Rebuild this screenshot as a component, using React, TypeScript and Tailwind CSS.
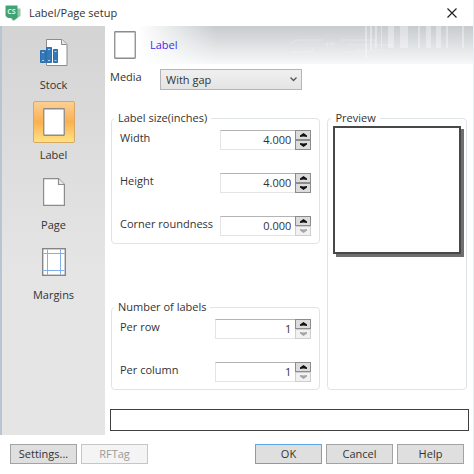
import React, { useState } from "react";

type Section = "Stock" | "Label" | "Page" | "Margins";

const StockIcon = () => (
  <svg width="30" height="30" viewBox="0 0 30 30" fill="none">
    <path d="M7.5 2.5H23l5 5V28.500H7.500Z" fill="#fff" stroke="#8c8c8c" />
    <path d="M22.500 2.500V7.500H27.500" fill="#e8e8e8" stroke="#8c8c8c" />
    <path d="M1.500 13.500h5v12h-5zM7.500 10.500h5v15h-5zM14.500 12.500h4v13h-4z" fill="#3479b8" stroke="#2e6fae" />
    <path d="M3 15.500h2M3 23.500h2M9 12.500h2M9 23.500h2M15.500 14.500h2M15.500 23.500h2" stroke="#b5d4ee" />
  </svg>
);

const LabelIcon = () => (
  <svg width="22" height="28" viewBox="0 0 22 28" fill="none">
    <rect x="0.75" y="0.75" width="20.500" height="26.500" rx="0.500" fill="#fff" stroke="#8c8c8c" strokeWidth="1.300" />
  </svg>
);

const PageIcon = () => (
  <svg width="22" height="28" viewBox="0 0 22 28" fill="none">
    <path d="M0.600 0.600H15.500L21.400 6.500V27.400H0.600Z" fill="#fff" stroke="#8c8c8c" strokeWidth="1.200" />
    <path d="M15.500 0.600V6.500H21.400" fill="#e8e8e8" stroke="#8c8c8c" strokeWidth="1.200" />
  </svg>
);

const MarginsIcon = () => (
  <svg width="24" height="28" viewBox="0 0 24 28" fill="none">
    <rect x="0.700" y="0.700" width="22.600" height="26.600" fill="#fff" stroke="#858585" strokeWidth="1.400" />
    <path d="M5.500 1.500V26.500M18.500 1.500V26.500M1.500 5.500H22.500M1.500 22.500H22.500" stroke="#7fb0ee" />
  </svg>
);

const sections: { name: Section; icon: React.ReactNode }[] = [
  { name: "Stock", icon: <StockIcon /> },
  { name: "Label", icon: <LabelIcon /> },
  { name: "Page", icon: <PageIcon /> },
  { name: "Margins", icon: <MarginsIcon /> },
];

const AppLogo = () => (
  <svg width="16" height="16" viewBox="0 0 16 16">
    <path d="M12 3.500h3.500V11L8 16 5 12.500Z" fill="#8fc9ab" />
    <path d="M1 0.500h11.500v10L10 13H3L0.500 11V1Z" fill="#43a274" />
    <path d="M7 13l2 2.500 3.500-3V10Z" fill="#43a274" />
    <text x="6.500" y="8.500" textAnchor="middle" fontSize="7" fontWeight="700" fill="#d9f3e5">
      CS
    </text>
  </svg>
);

const Banner = () => (
  <svg
    className="absolute right-0 top-0 h-full w-[190px]"
    viewBox="0 0 190 38"
    fill="none"
  >
    <path
      d="M82 0h2v32h-2zM87 0h2v24h-2zM92 0h2v22h-2zM98 0h1v22h-1zM105 0h6v22h-6zM117 0h8v22h-8zM135 0h2v22h-2zM143 0h5v22h-5zM153 0h5v22h-5zM163 0h2v22h-2zM179 0h2v22h-2z"
      fill="#fff"
      fillOpacity="0.350"
    />
    <path
      d="M8 18q2-4 8-4h24M8 26h18q4 0 4-4M42 18h10M44 16v6M49 16v6M58 14h34v12H62M64 19h46M72 24h30"
      stroke="#fff"
      strokeOpacity="0.220"
    />
  </svg>
);

const GroupBox = ({
  title,
  children,
}: {
  title: string;
  children: React.ReactNode;
}) => (
  <fieldset className="min-w-0 rounded-sm border border-[#dfe4e6] px-2 pb-[7px]">
    <legend className="-ml-1.5 px-1 leading-4">{title}</legend>
    {children}
  </fieldset>
);

const Arrow = ({ down = false }: { down?: boolean }) => (
  <svg width="7" height="4" viewBox="0 0 7 4" fill="currentColor">
    <path d={down ? "M0 0L3.500 0.600L7 0V1.500L3.500 4L0 1.500Z" : "M0 4L3.500 3.400L7 4V2.500L3.500 0L0 2.500Z"} />
  </svg>
);

const SpinField = ({
  label,
  id,
  initial,
  step,
  digits,
  min,
  wide = false,
}: {
  label: string;
  id: string;
  initial: number;
  step: number;
  digits: number;
  min: number;
  wide?: boolean;
}) => {
  const [value, setValue] = useState(initial);
  const stepButton =
    "flex min-h-0 flex-1 items-center justify-center border border-[#8c8c8c] bg-[#dcdcdc] text-[#111] disabled:border-[#cfcfcf] disabled:bg-[#f1f1f1] disabled:text-[#a5a5a5]";

  return (
    <div className="flex items-start justify-between">
      <label htmlFor={id} className="whitespace-nowrap leading-4">
        {label}
      </label>
      <div className={wide ? "flex h-5 w-24" : "flex h-5 w-[91px]"}>
        <input
          id={id}
          type="text"
          className="min-w-0 flex-1 border border-r-0 border-[#e2e5e7] border-t-[#b4b4b4] bg-white pr-1 text-right"
          value={value.toFixed(digits)}
          onChange={(e) => setValue(Number(e.target.value) || min)}
        />
        <div className="flex w-4 flex-col">
          <button
            type="button"
            aria-label={`Increase ${label}`}
            className={stepButton}
            onClick={() => setValue((v) => v + step)}
          >
            <Arrow />
          </button>
          <button
            type="button"
            aria-label={`Decrease ${label}`}
            className={stepButton}
            disabled={value <= min}
            onClick={() => setValue((v) => Math.max(min, v - step))}
          >
            <Arrow down />
          </button>
        </div>
      </div>
    </div>
  );
};

const DialogButton = ({
  children,
  disabled,
  primary,
}: {
  children: React.ReactNode;
  disabled?: boolean;
  primary?: boolean;
}) => (
  <button
    type="button"
    disabled={disabled}
    className={`h-5 w-[67px] border leading-4 disabled:border-[#c6c6c6] disabled:bg-[#f4f4f4] disabled:text-[#9a9a9a] ${
      primary ? "border-[#5fa6e6] bg-[#dfdfdf]" : "border-[#a3a3a3] bg-[#dfdfdf]"
    }`}
  >
    {children}
  </button>
);

export default function App() {
  const [section, setSection] = useState<Section>("Label");

  return (
    <div className="flex min-h-screen flex-col border-r border-[#e6f3f4] bg-white font-['Open_Sans','Noto_Sans',sans-serif] text-[11px] text-[#333]">
      <header className="flex h-[26px] items-center pl-[5px] pr-4">
        <AppLogo />
        <h1 className="ml-2 flex-1">Label/Page setup</h1>
        <button type="button" aria-label="Close">
          <svg width="10" height="10" viewBox="0 0 10 10" stroke="#222" strokeWidth="1.200">
            <path d="M0.500 0.500L9.500 9.500M9.500 0.500L0.500 9.500" />
          </svg>
        </button>
      </header>

      <div className="flex flex-1">
        <nav className="flex w-[105px] shrink-0 flex-col items-center gap-2 border-l-2 border-[#b7c5d3] bg-linear-to-b from-[#d4d4d4] to-[#e5e5e5] to-60% pt-[5px]">
          {sections.map(({ name, icon }) => (
            <button
              key={name}
              type="button"
              className="flex flex-col items-center gap-1"
              onClick={() => setSection(name)}
            >
              <span
                className={
                  section === name
                    ? "flex h-[42px] w-[42px] items-center justify-center rounded-xs border border-[#d9a860] bg-linear-to-b from-[#fbcf94] via-[#fbb04e] to-[#fde384]"
                    : "flex h-[42px] w-[42px] items-center justify-center"
                }
              >
                {icon}
              </span>
              <span className="leading-4">{name}</span>
            </button>
          ))}
        </nav>

        <main className="min-w-0 flex-1">
          <div className="relative flex h-[38px] items-center gap-3.5 bg-linear-to-b from-[#c7cbce] to-[#f7f8f8] pl-[9px]">
            <div className="absolute inset-y-0 left-0 w-28 bg-linear-to-r from-white from-30% to-transparent" />
            <Banner />
            <span className="relative">
              <LabelIcon />
            </span>
            <h2 className="relative leading-4 text-[#3a2fee]">Label</h2>
          </div>

          <div className="flex items-start pl-[5px] pt-[5px]">
            <label htmlFor="media" className="w-[50px] leading-4">
              Media
            </label>
            <div className="relative w-[142px]">
              <select
                id="media"
                className="h-[21px] w-full appearance-none border border-[#b5b5b5] bg-linear-to-b from-[#f0f0f0] to-[#e4e4e4] pl-[5px] leading-4"
              >
                <option>With gap</option>
                <option>Continuous</option>
              </select>
              <svg
                className="pointer-events-none absolute right-[5px] top-2"
                width="7"
                height="5"
                viewBox="0 0 7 5"
                fill="none"
                stroke="#555"
                strokeWidth="1.300"
              >
                <path d="M0.500 0.500L3.500 3.500L6.500 0.500" />
              </svg>
            </div>
          </div>

          <div className="grid grid-cols-[3fr_2fr] gap-[7px] pl-[6px] pr-[6px] pt-5">
            <div className="flex flex-col gap-[55px]">
              <GroupBox title="Label size(inches)">
                <div className="flex flex-col gap-[23px] pt-1">
                  <SpinField label="Width" id="width" initial={4} step={0.1} digits={3} min={0} />
                  <SpinField label="Height" id="height" initial={4} step={0.1} digits={3} min={0} />
                  <SpinField label="Corner roundness" id="corner" initial={0} step={0.1} digits={3} min={0} />
                </div>
              </GroupBox>
              <GroupBox title="Number of labels">
                <div className="flex flex-col gap-[23px] pt-1">
                  <SpinField label="Per row" id="rows" initial={1} step={1} digits={0} min={1} wide />
                  <SpinField label="Per column" id="columns" initial={1} step={1} digits={0} min={1} wide />
                </div>
              </GroupBox>
            </div>
            <fieldset className="min-w-0 rounded-sm border border-[#dfe4e6] px-[5px]">
              <legend className="-ml-0.5 px-1 leading-4">Preview</legend>
              <div className="aspect-square w-full border-2 border-[#484848] bg-white shadow-[3px_3px_0_#6f6f6f]" />
            </fieldset>
          </div>

          <div className="ml-[5px] mr-1 mt-[19px]">
            <output className="block h-[22px] border border-[#3f3f3f]" />
          </div>
        </main>
      </div>

      <footer className="flex h-[39px] items-start gap-1 pl-[10px] pr-[9px] pt-[9px]">
        <DialogButton>Settings...</DialogButton>
        <DialogButton disabled>RFTag</DialogButton>
        <span className="flex-1" />
        <DialogButton primary>OK</DialogButton>
        <DialogButton>Cancel</DialogButton>
        <DialogButton>Help</DialogButton>
      </footer>
    </div>
  );
}
